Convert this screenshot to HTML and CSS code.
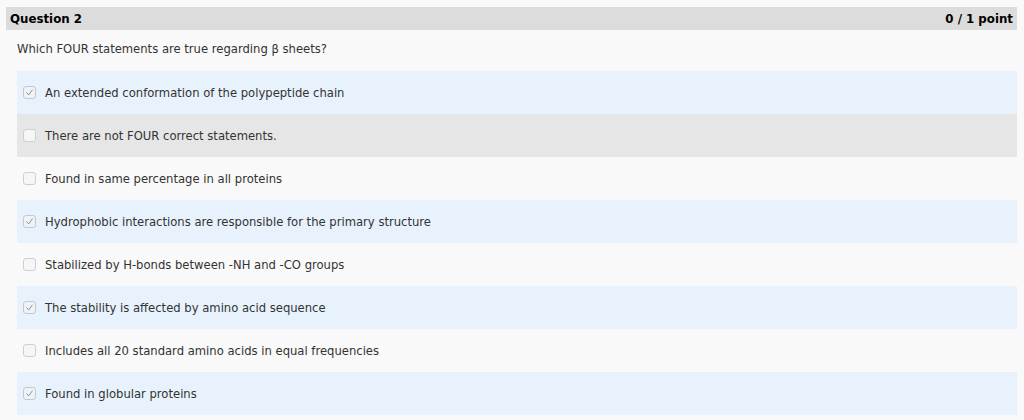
FILE: index.html
```html
<!DOCTYPE html>
<html>
<head>
<meta charset="utf-8">
<link rel="stylesheet" href="styles.css">
</head>
<body>
<div class="question">
  <div class="q-header">
    <span class="q-title">Question 2</span>
    <span class="q-score">0 / 1 point</span>
  </div>
  <div class="q-body">
    <p class="q-text">Which FOUR statements are true regarding β sheets?</p>
    <ul class="options">
      <li class="opt selected"><span class="box checked"><svg viewBox="0 0 13 13"><path d="M3 6.5 L5.5 9.4 L10 3.2"/></svg></span><span class="label">An extended conformation of the polypeptide chain</span></li>
      <li class="opt hover"><span class="box"></span><span class="label">There are not FOUR correct statements.</span></li>
      <li class="opt"><span class="box"></span><span class="label">Found in same percentage in all proteins</span></li>
      <li class="opt selected"><span class="box checked"><svg viewBox="0 0 13 13"><path d="M3 6.5 L5.5 9.4 L10 3.2"/></svg></span><span class="label">Hydrophobic interactions are responsible for the primary structure</span></li>
      <li class="opt"><span class="box"></span><span class="label">Stabilized by H-bonds between -NH and -CO groups</span></li>
      <li class="opt selected"><span class="box checked"><svg viewBox="0 0 13 13"><path d="M3 6.5 L5.5 9.4 L10 3.2"/></svg></span><span class="label">The stability is affected by amino acid sequence</span></li>
      <li class="opt"><span class="box"></span><span class="label">Includes all 20 standard amino acids in equal frequencies</span></li>
      <li class="opt selected"><span class="box checked"><svg viewBox="0 0 13 13"><path d="M3 6.5 L5.5 9.4 L10 3.2"/></svg></span><span class="label">Found in globular proteins</span></li>
    </ul>
  </div>
</div>
</body>
</html>
```

FILE: styles.css
```css
html, body {
  margin: 0;
  padding: 0;
  background: #f9f9f9;
}
body {
  padding: 7px 7px 0 6px;
  font-family: "DejaVu Sans", Verdana, sans-serif;
  font-size: 11.6px;
  color: #333;
}
.q-header {
  display: flex;
  justify-content: space-between;
  align-items: center;
  height: 23px;
  background: #dcdcdc;
  padding: 0 4px;
  font-weight: bold;
  font-size: 11.8px;
  color: #000;
}
.q-body {
  padding-left: 11px;
}
.q-text {
  margin: 0 0 12px 0;
  padding: 11px 0 0 0;
  line-height: 16px;
  height: 18px;
}
.options {
  list-style: none;
  margin: 0;
  padding: 0;
}
.opt {
  display: flex;
  align-items: center;
  height: 43px;
  padding-left: 6px;
  gap: 9px;
}
.opt.selected {
  background: #e8f2fc;
}
.opt.hover {
  background: #e6e6e6;
}
.box {
  width: 11px;
  height: 11px;
  border: 1px solid #cfcfcf;
  border-radius: 3px;
  background: #f6f6f6;
  display: flex;
  align-items: center;
  justify-content: center;
  flex: none;
}
.box.checked {
  background: #eef3f8;
  border-color: #c4c8ce;
}
.box svg {
  width: 13px;
  height: 13px;
  fill: none;
  stroke: #8c8c8c;
  stroke-width: 1.1;
}
.label {
  line-height: 16px;
}
```
